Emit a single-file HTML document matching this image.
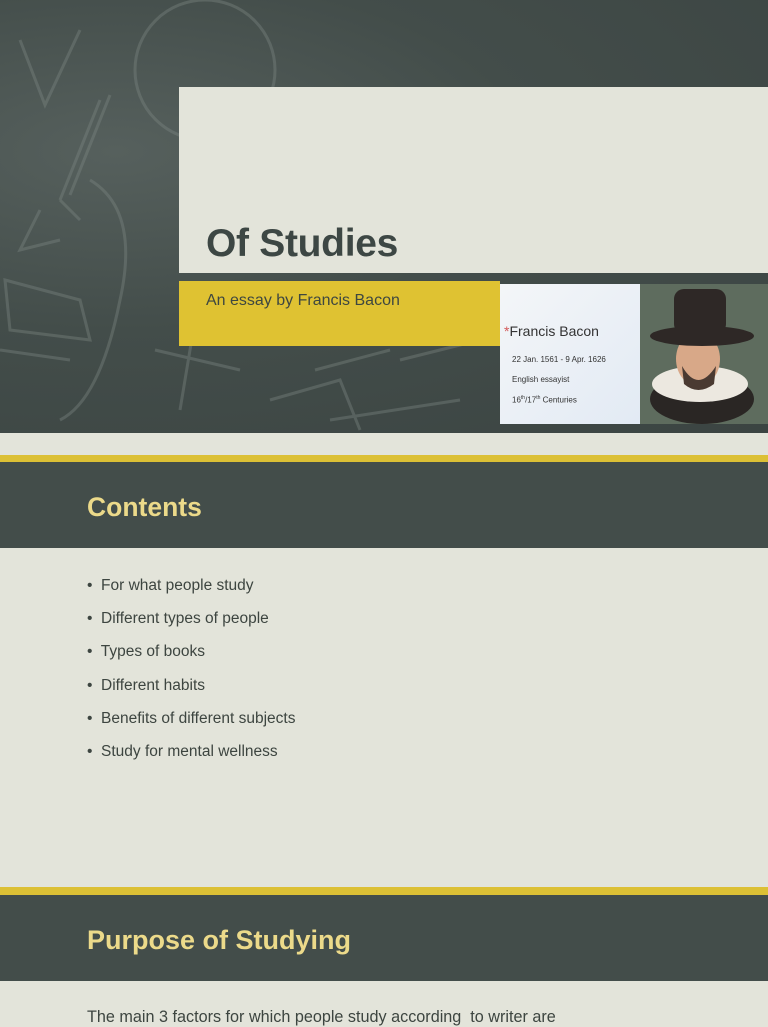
<!DOCTYPE html>
<html><head><meta charset="utf-8"><style>
*{margin:0;padding:0;box-sizing:border-box}
body{width:768px;height:1024px;overflow:hidden;background:#e3e4da;font-family:"Liberation Sans",sans-serif;position:relative}
.abs{position:absolute}
</style></head><body>
<div class="abs" style="left:0;top:0;width:768px;height:433px;background:radial-gradient(ellipse at 15% 35%,#56605d 0%,#434d4a 45%,#3b4442 100%)"></div>
<svg class="abs" style="left:0;top:0" width="768" height="433" fill="none" stroke="#7d8783" stroke-width="3" opacity="0.4">
<path d="M20 40 L45 105 L80 30"/>
<circle cx="205" cy="70" r="70"/>
<path d="M100 100 L60 200 M110 95 L70 195 M40 210 L20 250 L60 240 M60 200 L80 220"/>
<path d="M90 180 Q140 210 120 300 Q100 400 60 420"/>
<path d="M5 280 L80 300 L90 340 L10 330 Z M0 350 L70 360"/>
<path d="M155 350 L240 370 M195 320 L180 410"/>
<path d="M315 370 L390 350 M270 400 L340 380 L360 430"/>
<path d="M330 420 L460 400 M400 360 L480 340"/>
</svg>
<div class="abs" style="left:179px;top:87px;width:589px;height:186px;background:#e3e4da"></div>
<div class="abs" style="left:206px;top:222px;font-size:39px;font-weight:bold;color:#3d4744;letter-spacing:-0.3px">Of Studies</div>
<div class="abs" style="left:179px;top:281px;width:321px;height:65px;background:#dfc232"></div>
<div class="abs" style="left:206px;top:292px;font-size:16px;color:#3e4740">An essay by Francis Bacon</div>
<div class="abs" style="left:500px;top:284px;width:140px;height:140px;background:linear-gradient(135deg,#f4f6f8,#e2eaf4)"></div>
<div class="abs" style="left:504px;top:323px;font-size:14px;color:#333"><span style="color:#d35a5a">*</span>Francis Bacon</div>
<div class="abs" style="left:512px;top:350px;font-size:8px;color:#333;line-height:19.5px">22 Jan. 1561 - 9 Apr. 1626<br>English essayist<br>16<sup style="font-size:5px">th</sup>/17<sup style="font-size:5px">th</sup> Centuries</div>
<div class="abs" style="left:640px;top:284px;width:128px;height:140px;background:#5e6c5e;overflow:hidden">
<svg width="128" height="140">
<ellipse cx="62" cy="115" rx="52" ry="25" fill="#2a2624"/>
<ellipse cx="60" cy="100" rx="48" ry="18" fill="#ece8e0"/>
<ellipse cx="58" cy="75" rx="22" ry="27" fill="#d8a888"/>
<path d="M42 82 Q58 110 76 82 L74 100 Q58 112 44 100Z" fill="#4a3a32"/>
<rect x="34" y="5" width="52" height="45" rx="10" fill="#2e2826"/>
<ellipse cx="62" cy="52" rx="52" ry="10" fill="#2e2826"/>
</svg></div>
<div class="abs" style="left:0;top:455px;width:768px;height:7px;background:#dcc035"></div>
<div class="abs" style="left:0;top:462px;width:768px;height:86px;background:#434d4a"></div>
<div class="abs" style="left:87px;top:492px;font-size:26.5px;font-weight:bold;color:#ecda8a">Contents</div>
<div class="abs" style="left:87px;top:569px;font-size:15.5px;color:#3d4540;line-height:33.2px">
<div>•&nbsp; For what people study</div>
<div>•&nbsp; Different types of people</div>
<div>•&nbsp; Types of books</div>
<div>•&nbsp; Different habits</div>
<div>•&nbsp; Benefits of different subjects</div>
<div>•&nbsp; Study for mental wellness</div>
</div>
<div class="abs" style="left:0;top:887px;width:768px;height:8px;background:#dcc035"></div>
<div class="abs" style="left:0;top:895px;width:768px;height:86px;background:#434d4a"></div>
<div class="abs" style="left:87px;top:925px;font-size:27px;font-weight:bold;color:#ecda8a">Purpose of Studying</div>
<div class="abs" style="left:87px;top:1008px;font-size:16.2px;color:#3d4540">The main 3 factors for which people study according &nbsp;to writer are</div>
</body></html>
